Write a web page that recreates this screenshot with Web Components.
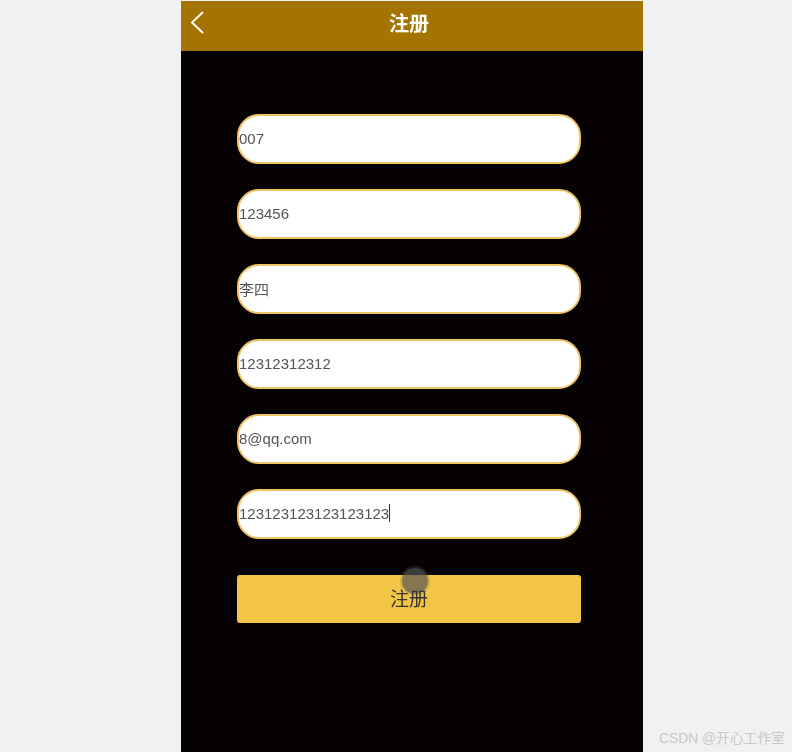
<!DOCTYPE html>
<html lang="zh">
<head>
<meta charset="utf-8">
<title>注册</title>
<style>
html,body{margin:0;height:100%;background:#f1f1f1;overflow:hidden}
body{font-family:"Liberation Sans","Noto Sans CJK SC",sans-serif}
</style>
</head>
<body>
<register-page>
    <nav-bar slot="nav">注册</nav-bar>
    <text-field>007</text-field>
    <text-field>123456</text-field>
    <text-field>李四</text-field>
    <text-field>12312312312</text-field>
    <text-field>8@qq.com</text-field>
    <text-field focused>123123123123123123</text-field>
    <submit-button slot="action">注册</submit-button>
</register-page>
<script>
class RegisterPage extends HTMLElement{
    constructor(){
        super()
        this.attachShadow({mode : 'open'})
        this.shadowRoot.innerHTML = `
            <style>
                :host{
                    display: flex;
                    flex-direction: column;
                    box-sizing: border-box;
                    height: 752px;
                    padding-top: 1px;
                }
                .phone{
                    width: 462px;
                    margin-left: 181px;
                    flex: 1;
                    background: #060103;
                    display: flex;
                    flex-direction: column;
                    filter: blur(.35px);
                }
                .form{
                    display: flex;
                    flex-direction: column;
                    gap: 25px;
                    padding: 63px 62px 0 56px;
                }
                .action{
                    padding: 36px 62px 0 56px;
                }
                .mark{
                    position: absolute;
                    right: 7px;
                    bottom: 4px;
                    font-size: 13.8px;
                    line-height: 18px;
                    color: #c8c8c8;
                }
            </style>
            <div class="phone">
                <slot name="nav"></slot>
                <div class="form"><slot></slot></div>
                <div class="action"><slot name="action"></slot></div>
            </div>
            <div class="mark">CSDN @开心工作室</div>
        `
    }
}

class NavBar extends HTMLElement{
    constructor(){
        super()
        this.attachShadow({mode : 'open'})
        this.shadowRoot.innerHTML = `
            <style>
                :host{
                    display: grid;
                    grid-template-columns: 1fr auto 1fr;
                    align-items: center;
                    height: 50px;
                    padding-right: 6px;
                    background: #a57400;
                    color: #fff;
                    font-size: 20px;
                    font-weight: bold;
                }
                svg{
                    display: block;
                    margin: -7px 0 0 9px;
                }
                .title{
                    margin-top: -7px;
                }
            </style>
            <svg width="14" height="24" viewBox="0 0 14 24" fill="none" stroke="#fff" stroke-width="2" stroke-linecap="round" stroke-linejoin="round">
                <path d="M12.5 1.5 L2 11.5 L12.5 21.5"/>
            </svg>
            <div class="title"><slot></slot></div>
        `
    }
}

class TextField extends HTMLElement{
    constructor(){
        super()
        this.attachShadow({mode : 'open'})
        this.shadowRoot.innerHTML = `
            <style>
                :host{
                    display: flex;
                    align-items: center;
                    box-sizing: border-box;
                    height: 50px;
                    padding-bottom: 2px;
                    background: #fff;
                    border: 2px solid #eec565;
                    border-radius: 22px;
                    color: #555;
                    font-size: 15px;
                }
                .caret{
                    display: none;
                    width: 1px;
                    height: 18px;
                    background: #333;
                }
                :host([focused]) .caret{
                    display: block;
                }
            </style>
            <slot></slot><span class="caret"></span>
        `
    }
}

class SubmitButton extends HTMLElement{
    constructor(){
        super()
        this.attachShadow({mode : 'open'})
        this.shadowRoot.innerHTML = `
            <style>
                :host{
                    display: flex;
                    position: relative;
                    align-items: center;
                    justify-content: center;
                    box-sizing: border-box;
                    height: 48px;
                    padding-bottom: 4px;
                    background: #f2c544;
                    border-radius: 3px;
                    color: #333;
                    font-size: 19px;
                }
                .touch{
                    position: absolute;
                    left: 165px;
                    top: -7px;
                    width: 26px;
                    height: 26px;
                    border-radius: 50%;
                    background: rgba(85,85,85,.7);
                    box-shadow: 0 0 0 2px rgba(110,110,110,.25);
                }
                .label{
                    position: relative;
                }
            </style>
            <div class="touch"></div>
            <span class="label"><slot></slot></span>
        `
    }
}

customElements.define('register-page', RegisterPage)
customElements.define('nav-bar', NavBar)
customElements.define('text-field', TextField)
customElements.define('submit-button', SubmitButton)
</script>
</body>
</html>
